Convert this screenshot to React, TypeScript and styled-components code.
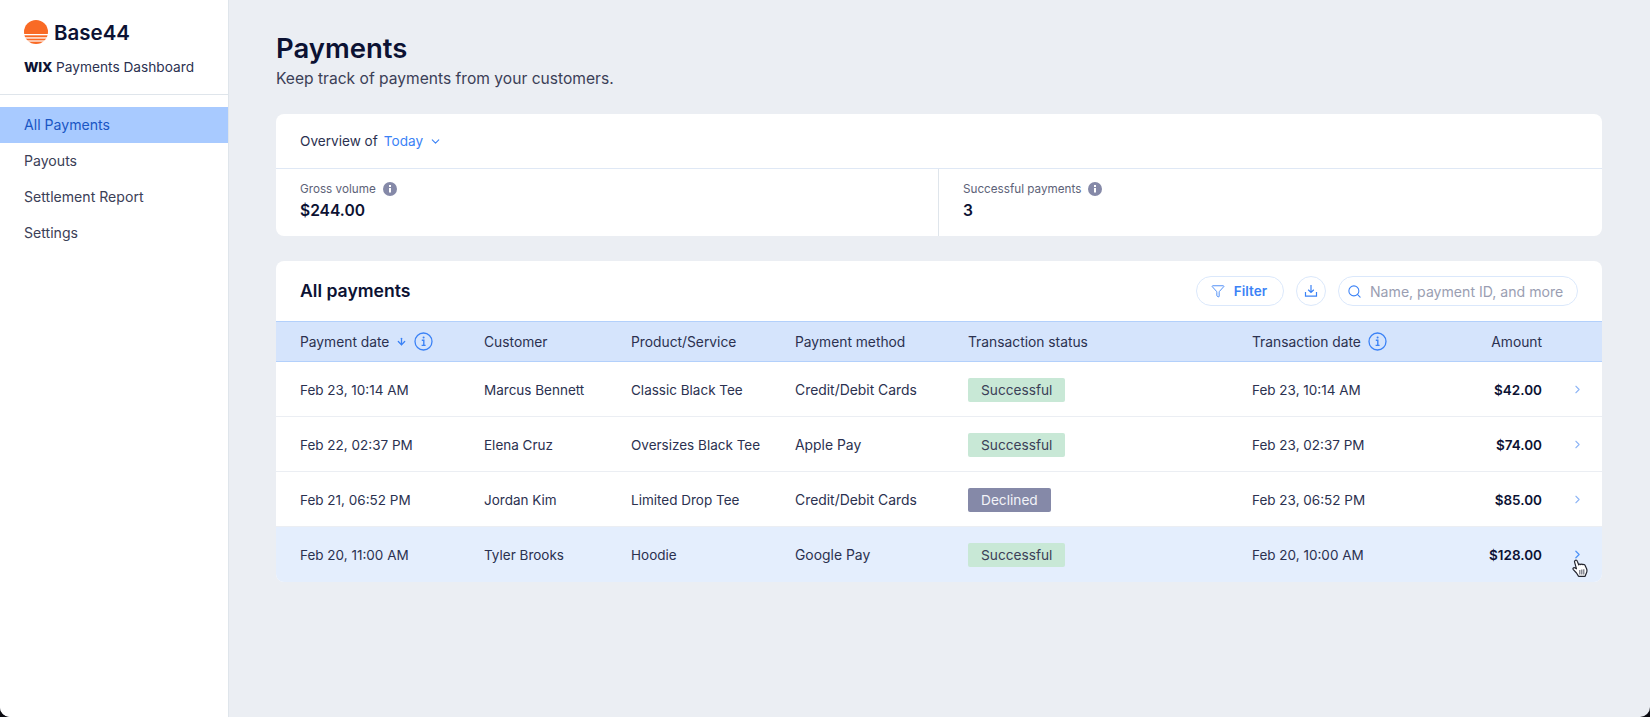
import React from "react";
import styled, { createGlobalStyle } from "styled-components";
import { ChevronDown, ChevronRight, Filter, Search, ArrowDown } from "lucide-react";

const GlobalStyle = createGlobalStyle`
  html, body {
    margin: 0;
    padding: 0;
    height: 100%;
    background: #0b0b12;
  }
  #root {
    height: 100%;
  }
  * {
    box-sizing: border-box;
  }
`;

const Page = styled.div`
  display: flex;
  width: 1650px;
  height: 717px;
  overflow: hidden;
  background: #ebeef3;
  border-radius: 0 0 10px 10px;
  font-family: Inter, "Noto Sans", sans-serif;
  color: #162d3d;
`;

const Sidebar = styled.aside`
  width: 229px;
  flex: none;
  background: #fff;
  border-right: 1px solid #dfe5eb;
`;

const Brand = styled.div`
  height: 95px;
  padding: 20px 24px 0;
  border-bottom: 1px solid #dfe5eb;
`;

const BrandRow = styled.div`
  display: flex;
  align-items: center;
  gap: 6px;
  height: 24px;
  font-size: 20.5px;
  font-weight: 600;
  color: #0c1233;
  line-height: 24px;
  span {
    padding-top: 2px;
  }
`;

const BrandSub = styled.div`
  margin-top: 14px;
  font-size: 13.7px;
  line-height: 18px;
  color: #2b3150;
  white-space: nowrap;
  b {
    font-weight: 800;
    color: #0c1233;
    letter-spacing: -0.2px;
  }
`;

const Nav = styled.nav`
  margin-top: 12px;
`;

const NavItem = styled.div<{ $active?: boolean }>`
  height: 36px;
  padding: 0 0 2px 24px;
  display: flex;
  align-items: center;
  font-size: 14.1px;
  color: ${(p) => (p.$active ? "#1a56c4" : "#3b4057")};
  background: ${(p) => (p.$active ? "#a8caff" : "transparent")};
`;

const Main = styled.main`
  flex: 1;
  padding: 30px 48px 0 47px;
`;

const Title = styled.h1`
  margin: 0;
  font-size: 27.5px;
  line-height: 36px;
  font-weight: 600;
  color: #0c1233;
`;

const Subtitle = styled.p`
  margin: 2px 0 0;
  font-size: 15.6px;
  line-height: 22px;
  color: #3b4057;
`;

const Card = styled.section`
  background: #fff;
  border-radius: 8px;
  overflow: hidden;
`;

const OverviewCard = styled(Card)`
  margin-top: 24px;
  height: 122px;
`;

const OverviewHead = styled.div`
  height: 55px;
  padding-left: 24px;
  display: flex;
  align-items: center;
  gap: 6px;
  font-size: 13.6px;
  color: #2b3150;
  border-bottom: 1px solid #dfe8f5;
`;

const TodayLink = styled.span`
  display: inline-flex;
  align-items: center;
  gap: 6px;
  color: #3b82f6;
`;

const Stats = styled.div`
  display: grid;
  grid-template-columns: 662px 1fr;
  height: 67px;
`;

const Stat = styled.div<{ $divided?: boolean }>`
  padding: 12px 24px 0;
  border-left: ${(p) => (p.$divided ? "1px solid #dfe5eb" : "none")};
`;

const StatLabel = styled.div`
  display: flex;
  align-items: center;
  gap: 7px;
  font-size: 11.7px;
  line-height: 16px;
  color: #5d6278;
`;

const StatValue = styled.div`
  margin-top: 3px;
  font-size: 15.6px;
  line-height: 22px;
  font-weight: 600;
  color: #0c1233;
`;

const PaymentsCard = styled(Card)`
  position: relative;
  margin-top: 25px;
`;

const Toolbar = styled.div`
  height: 60px;
  padding: 0 24px;
  display: flex;
  align-items: center;
  gap: 12px;
`;

const CardTitle = styled.h2`
  margin: 0 auto 2px 0;
  font-size: 17.6px;
  font-weight: 600;
  color: #0c1233;
`;

const OutlineButton = styled.button`
  height: 30px;
  padding: 0 16px 0 14px;
  display: flex;
  align-items: center;
  gap: 9px;
  font: 600 13.5px Inter, sans-serif;
  color: #3b82f6;
  background: #fff;
  border: 1.5px solid #dbe8fb;
  border-radius: 15px;
`;

const IconButton = styled(OutlineButton)`
  width: 30px;
  padding: 0;
  justify-content: center;
`;

const SearchBox = styled.div`
  width: 240px;
  height: 30px;
  padding: 0 8px;
  display: flex;
  align-items: center;
  gap: 8px;
  font-size: 14.1px;
  color: #9a9eb2;
  border: 1.5px solid #dbe8fb;
  border-radius: 15px;
  white-space: nowrap;
`;

const columns = "184px 147px 164px 173px 284px 1fr 100px 60px";

const HeadRow = styled.div`
  height: 41px;
  padding-left: 24px;
  display: grid;
  grid-template-columns: ${columns};
  align-items: center;
  font-size: 13.8px;
  color: #2b3150;
  background: #d5e4fc;
  border-top: 1.5px solid #b3d0fb;
  border-bottom: 1.5px solid #b3d0fb;
`;

const HeadCell = styled.div<{ $right?: boolean }>`
  display: flex;
  align-items: center;
  gap: 7px;
  justify-content: ${(p) => (p.$right ? "flex-end" : "flex-start")};
`;

const Row = styled.div<{ $hover?: boolean }>`
  height: 55px;
  padding: ${(p) => (p.$hover ? "0" : "1px")} 0 0 24px;
  display: grid;
  grid-template-columns: ${columns};
  align-items: center;
  font-size: 13.5px;
  color: #2b3150;
  background: ${(p) => (p.$hover ? "#e4eefd" : "#fff")};
  border-bottom: ${(p) => (p.$hover ? "0" : "1.5px solid #ebeef3")};
`;

const MethodCell = styled.div`
  font-size: 13.9px;
`;

const Amount = styled.div`
  font-weight: 600;
  color: #0c1233;
  text-align: right;
`;

const RowArrow = styled.div<{ $hover?: boolean }>`
  display: flex;
  justify-content: center;
  padding-left: 10px;
  color: ${(p) => (p.$hover ? "#4f94f8" : "#8fb6f6")};
`;

const Status = styled.span<{ $declined?: boolean }>`
  display: inline-block;
  height: 24px;
  padding: 0 13px;
  line-height: 24px;
  font-size: 13.7px;
  border-radius: 2px;
  color: ${(p) => (p.$declined ? "#f2f3f8" : "#3b4057")};
  background: ${(p) => (p.$declined ? "#8589a8" : "#c8e8d6")};
`;

const Cursor = styled.svg`
  position: absolute;
  right: 13px;
  bottom: 5px;
`;

const LogoIcon = () => (
  <svg width="24" height="24" viewBox="0 0 24 24">
    <defs>
      <clipPath id="sun">
        <circle cx="12" cy="12" r="12" />
      </clipPath>
    </defs>
    <g clipPath="url(#sun)" fill="#f96a25">
      <rect x="0" y="0" width="24" height="14" />
      <rect x="0" y="15.3" width="24" height="2" />
      <rect x="0" y="18.6" width="24" height="1.8" />
      <rect x="0" y="21.6" width="24" height="2.4" />
    </g>
  </svg>
);

const InfoSolid = () => (
  <svg width="14" height="14" viewBox="0 0 14 14">
    <circle cx="7" cy="7" r="7" fill="#8589a8" />
    <rect x="6" y="6" width="2" height="4.5" fill="#fff" />
    <rect x="6" y="3" width="2" height="2" fill="#fff" />
  </svg>
);

const InfoOutline = () => (
  <svg width="19" height="19" viewBox="0 0 19 19" fill="none" stroke="#3b82f6">
    <circle cx="9.5" cy="9.5" r="8.5" strokeWidth="1.3" />
    <path d="M7.8 8.2h2v5M7.6 13.4h4" strokeWidth="1.4" />
    <circle cx="9.6" cy="5.6" r="1" fill="#3b82f6" stroke="none" />
  </svg>
);

const DownloadIcon = () => (
  <svg width="14" height="14" viewBox="0 0 14 14" fill="none" stroke="#3b82f6" strokeWidth="1.2">
    <path d="M7 1v7.5M4.2 5.8 7 8.5l2.8-2.7M1.5 8v4.2h11V8" />
  </svg>
);

const HandCursor = () => (
  <Cursor width="17" height="18" viewBox="0 0 17 18">
    <path
      d="M3.2 1.4c.9-.5 1.8 0 2.1.8l1.5 3.7c.3-.8 1.4-1 2-.3.4-.7 1.6-.7 2.1.1.6-.5 1.7-.3 2.1.5l1.6 3.6c.6 1.6.4 3.3-.4 4.7l-1 2.5c-.1.3-.4.5-.7.4l-5.6-.1c-.3 0-.5-.2-.6-.4L4.5 14 1.3 10.6c-.8-.9.1-2.4 1.4-1.9l1.8 1.1L2.6 3.2c-.2-.7 0-1.4.6-1.8z"
      fill="#fff"
      stroke="#22242e"
      strokeWidth="1.2"
      strokeLinejoin="round"
    />
    <path d="M7.8 11v4.4M9.8 10.6V15.4M11.8 10.2V15.4" stroke="#6a6c78" strokeWidth="1.2" />
  </Cursor>
);

const payments = [
  { date: "Feb 23, 10:14 AM", customer: "Marcus Bennett", product: "Classic Black Tee", method: "Credit/Debit Cards", status: "Successful", tx: "Feb 23, 10:14 AM", amount: "$42.00" },
  { date: "Feb 22, 02:37 PM", customer: "Elena Cruz", product: "Oversizes Black Tee", method: "Apple Pay", status: "Successful", tx: "Feb 23, 02:37 PM", amount: "$74.00" },
  { date: "Feb 21, 06:52 PM", customer: "Jordan Kim", product: "Limited Drop Tee", method: "Credit/Debit Cards", status: "Declined", tx: "Feb 23, 06:52 PM", amount: "$85.00" },
  { date: "Feb 20, 11:00 AM", customer: "Tyler Brooks", product: "Hoodie", method: "Google Pay", status: "Successful", tx: "Feb 20, 10:00 AM", amount: "$128.00" },
];

const App = () => {
  return (
    <>
      <GlobalStyle />
      <Page>
        <Sidebar>
          <Brand>
            <BrandRow>
              <LogoIcon />
              <span>Base44</span>
            </BrandRow>
            <BrandSub>
              <b>WIX</b> Payments Dashboard
            </BrandSub>
          </Brand>
          <Nav>
            <NavItem $active>All Payments</NavItem>
            <NavItem>Payouts</NavItem>
            <NavItem>Settlement Report</NavItem>
            <NavItem>Settings</NavItem>
          </Nav>
        </Sidebar>
        <Main>
          <Title>Payments</Title>
          <Subtitle>Keep track of payments from your customers.</Subtitle>
          <OverviewCard>
            <OverviewHead>
              Overview of
              <TodayLink>
                Today <ChevronDown size={13} />
              </TodayLink>
            </OverviewHead>
            <Stats>
              <Stat>
                <StatLabel>
                  Gross volume <InfoSolid />
                </StatLabel>
                <StatValue>$244.00</StatValue>
              </Stat>
              <Stat $divided>
                <StatLabel>
                  Successful payments <InfoSolid />
                </StatLabel>
                <StatValue>3</StatValue>
              </Stat>
            </Stats>
          </OverviewCard>
          <PaymentsCard>
            <Toolbar>
              <CardTitle>All payments</CardTitle>
              <OutlineButton>
                <Filter size={14} strokeWidth={1.5} />
                Filter
              </OutlineButton>
              <IconButton>
                <DownloadIcon />
              </IconButton>
              <SearchBox>
                <Search size={15} color="#3b82f6" strokeWidth={1.7} />
                Name, payment ID, and more
              </SearchBox>
            </Toolbar>
            <HeadRow>
              <HeadCell>
                Payment date <ArrowDown size={11} color="#3b82f6" strokeWidth={2.8} /> <InfoOutline />
              </HeadCell>
              <HeadCell>Customer</HeadCell>
              <HeadCell>Product/Service</HeadCell>
              <HeadCell>Payment method</HeadCell>
              <HeadCell>Transaction status</HeadCell>
              <HeadCell>
                Transaction date <InfoOutline />
              </HeadCell>
              <HeadCell $right>Amount</HeadCell>
              <div />
            </HeadRow>
            {payments.map((p, i) => {
              const hover = i === payments.length - 1;
              return (
                <Row key={p.date} $hover={hover}>
                  <div>{p.date}</div>
                  <div>{p.customer}</div>
                  <div>{p.product}</div>
                  <MethodCell>{p.method}</MethodCell>
                  <div>
                    <Status $declined={p.status === "Declined"}>{p.status}</Status>
                  </div>
                  <div>{p.tx}</div>
                  <Amount>{p.amount}</Amount>
                  <RowArrow $hover={hover}>
                    <ChevronRight size={13} strokeWidth={hover ? 2.4 : 2} />
                  </RowArrow>
                </Row>
              );
            })}
            <HandCursor />
          </PaymentsCard>
        </Main>
      </Page>
    </>
  );
};

export default App;
